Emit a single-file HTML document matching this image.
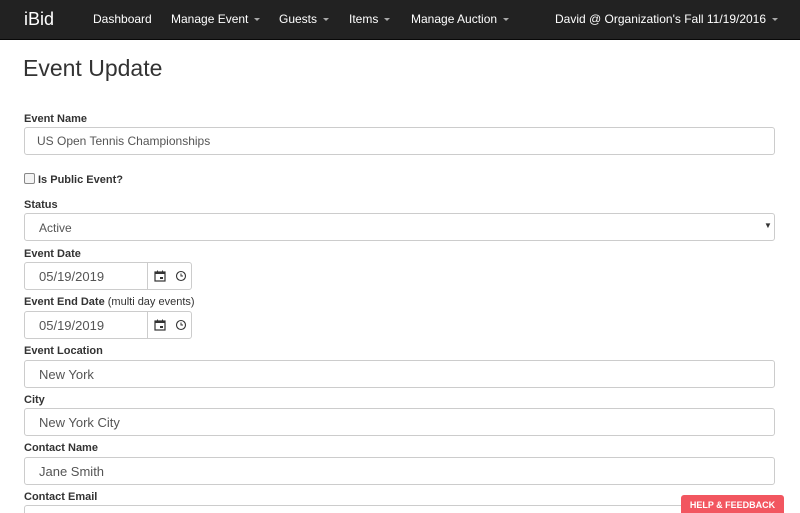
<!DOCTYPE html>
<html><head><style>
html,body{margin:0;width:800px;height:513px;overflow:hidden}
body{background:#fff;font-family:"Liberation Sans",Arial,sans-serif;color:#333;position:relative}
.nav{position:absolute;left:0;top:0;width:800px;height:39px;background:#222;border-bottom:1px solid #080808}
.nav span{position:absolute;top:12px;color:#fff;font-size:12px;white-space:nowrap}
.caret{display:inline-block;width:0;height:0;border-left:3.5px solid transparent;border-right:3.5px solid transparent;border-top:3.5px solid #aaa;vertical-align:middle;margin-left:6px}
.abs{position:absolute}
.lbl{position:absolute;left:24px;font-size:11px;font-weight:bold;color:#333}
.inp{position:absolute;left:24px;width:749px;height:26px;border:1px solid #ccc;border-radius:3px;font-size:13px;color:#555}
.inp span{position:absolute;left:14px;top:6px}
.date{width:166px}
.date .div{position:absolute;left:122px;top:0;height:26px;border-left:1px solid #ccc}
</style></head><body>
<div class="nav">
<span style="left:24px;top:9px;font-size:18px">iBid</span>
<span style="left:93px">Dashboard</span>
<span style="left:171px">Manage Event<i class="caret"></i></span>
<span style="left:279px">Guests<i class="caret"></i></span>
<span style="left:349px">Items<i class="caret"></i></span>
<span style="left:411px">Manage Auction<i class="caret"></i></span>
<span style="left:555px">David @ Organization's Fall 11/19/2016<i class="caret"></i></span>
</div>
<div class="abs" style="left:23px;top:55px;font-size:23px;color:#333">Event Update</div>
<div class="lbl" style="top:113px">Event Name</div>
<div class="inp" style="top:127px"><span style="left:12px;font-size:12px;top:6px">US Open Tennis Championships</span></div>
<div class="abs" style="left:24px;top:173px;width:9px;height:9px;border:1px solid #888;border-radius:2px;background:#f4f4f4"></div>
<div class="lbl" style="top:174px;left:38px">Is Public Event?</div>
<div class="lbl" style="top:199px">Status</div>
<div class="inp" style="top:213px"><span style="font-size:12px;top:7px">Active</span><span style="left:739px;top:7px;font-size:8px;color:#333">▼</span></div>
<div class="lbl" style="top:248px">Event Date</div>
<div class="inp date" style="top:262px"><span style="top:6px">05/19/2019</span><div class="div"></div>
<svg class="abs" style="left:129px;top:7px" width="12" height="12" viewBox="0 0 12 12"><rect x="1" y="2" width="10" height="9" fill="none" stroke="#333" stroke-width="1.2"/><rect x="1" y="2" width="10" height="2" fill="#333"/><rect x="6" y="7" width="3" height="2" fill="#333"/><line x1="3.5" y1="0.5" x2="3.5" y2="2" stroke="#333"/><line x1="8.5" y1="0.5" x2="8.5" y2="2" stroke="#333"/></svg>
<svg class="abs" style="left:150px;top:7px" width="12" height="12" viewBox="0 0 12 12"><circle cx="6" cy="6" r="4.5" fill="none" stroke="#333" stroke-width="1.1"/><path d="M6 3.5V6H8" fill="none" stroke="#333"/></svg></div>
<div class="lbl" style="top:296px">Event End Date <span style="font-weight:normal">(multi day events)</span></div>
<div class="inp date" style="top:311px"><span style="top:6px">05/19/2019</span><div class="div"></div>
<svg class="abs" style="left:129px;top:7px" width="12" height="12" viewBox="0 0 12 12"><rect x="1" y="2" width="10" height="9" fill="none" stroke="#333" stroke-width="1.2"/><rect x="1" y="2" width="10" height="2" fill="#333"/><rect x="6" y="7" width="3" height="2" fill="#333"/><line x1="3.5" y1="0.5" x2="3.5" y2="2" stroke="#333"/><line x1="8.5" y1="0.5" x2="8.5" y2="2" stroke="#333"/></svg>
<svg class="abs" style="left:150px;top:7px" width="12" height="12" viewBox="0 0 12 12"><circle cx="6" cy="6" r="4.5" fill="none" stroke="#333" stroke-width="1.1"/><path d="M6 3.5V6H8" fill="none" stroke="#333"/></svg></div>
<div class="lbl" style="top:345px">Event Location</div>
<div class="inp" style="top:360px"><span>New York</span></div>
<div class="lbl" style="top:394px">City</div>
<div class="inp" style="top:408px"><span>New York City</span></div>
<div class="lbl" style="top:442px">Contact Name</div>
<div class="inp" style="top:457px"><span>Jane Smith</span></div>
<div class="lbl" style="top:491px">Contact Email</div>
<div class="inp" style="top:505px"></div>
<div class="abs" style="left:681px;top:495px;width:103px;height:18px;background:#f25660;border-radius:3px 3px 0 0;color:#fff;font-size:9px;font-weight:bold;text-align:center;line-height:20px">HELP &amp; FEEDBACK</div>
</body></html>
